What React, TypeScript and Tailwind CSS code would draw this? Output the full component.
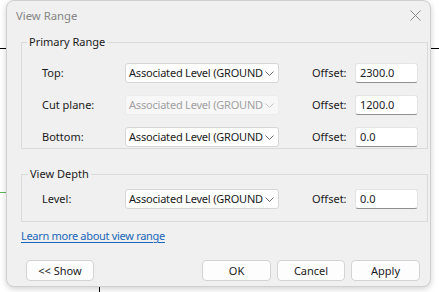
import React from "react";

const font = { fontFamily: '"Noto Sans", "Segoe UI", sans-serif' };

function Chevron({ disabled }: { disabled?: boolean }) {
  return (
    <svg width="9" height="5" viewBox="0 0 9 5" className="shrink-0">
      <path d="M0.5 0.5 L4.5 4.5 L8.5 0.5" fill="none" stroke={disabled ? "#c4c4c4" : "#6e6e6e"} strokeWidth="1" />
    </svg>
  );
}

function Select({ disabled }: { disabled?: boolean }) {
  return (
    <div
      className={
        "w-[154px] h-[20px] flex items-center justify-between pl-[3px] pr-[4px] rounded-[3px] " +
        (disabled
          ? "bg-[#f7f7f7] text-[#a0a0a0] border border-[#ececec]"
          : "bg-white text-[#1b1b1b] border border-[#d6d6d6]")
      }
    >
      <span className="whitespace-nowrap tracking-[-0.2px]">Associated Level (GROUND</span>
      <Chevron disabled={disabled} />
    </div>
  );
}

function Row({ label, value, disabled }: { label: string; value: string; disabled?: boolean }) {
  return (
    <div className="flex items-center h-[20px]">
      <div className="w-[83px] text-[#1b1b1b]">{label}</div>
      <Select disabled={disabled} />
      <div className="ml-[33px] w-[43px] text-[#1b1b1b]">Offset:</div>
      <div className="w-[63px] h-[20px] bg-white border border-[#e3e3e3] border-b-[#8f8f8f] rounded-[3px] flex items-center pl-[4px] text-[#1b1b1b]">
        {value}
      </div>
    </div>
  );
}

function Btn({ children, w }: { children: React.ReactNode; w: string }) {
  return (
    <div className={"h-[21px] flex items-center justify-center rounded-[4px] bg-[#fdfdfd] border border-[#d3d3d3] text-[#1b1b1b] " + w}>
      {children}
    </div>
  );
}

export default function App() {
  return (
    <div className="relative w-[439px] h-[292px] bg-white overflow-hidden text-[11px] leading-[16px]" style={font}>
      {/* desktop lines behind the dialog */}
      <div className="absolute left-0 top-[48px] w-[10px] h-[1px] bg-black" />
      <div className="absolute right-0 top-[48px] w-[12px] h-[1px] bg-black" />
      <div className="absolute left-0 top-[192px] w-[10px] h-[1px] bg-[#5fb760]" />
      <div className="absolute left-[99px] top-[280px] w-[1px] h-[12px] bg-black" />

      <div className="relative ml-[6px] w-[425px] h-[287px] rounded-[8px] border border-[#cfcfcf] bg-[#f0f0f0] shadow-[0_2px_6px_rgba(0,0,0,0.18)] flex flex-col">
        <div className="h-[29px] flex items-center justify-between pl-[9px] pr-[9px] shrink-0">
          <span className="text-[#858585] text-[11.3px]">View Range</span>
          <svg width="11" height="11" viewBox="0 0 11 11">
            <path d="M0.5 0.5 L10.5 10.5 M10.5 0.5 L0.5 10.5" stroke="#8a8a8a" strokeWidth="1" />
          </svg>
        </div>

        <div className="pl-[14px] flex flex-col">
          <fieldset className="mt-[4px] w-[407px] border border-[#dadada] pb-[1px]">
            <legend className="ml-[5px] px-[2px] text-[#1b1b1b]">Primary Range</legend>
            <div className="pt-[13px] pl-[20px] flex flex-col gap-[12px]">
              <Row label="Top:" value="2300.0" />
              <Row label="Cut plane:" value="1200.0" disabled />
              <Row label="Bottom:" value="0.0" />
            </div>
          </fieldset>

          <fieldset className="mt-[17px] w-[407px] border border-[#dadada] pb-[12px]">
            <legend className="ml-[6px] px-[2px] text-[#1b1b1b]">View Depth</legend>
            <div className="pt-[7px] pl-[20px] flex flex-col">
              <Row label="Level:" value="0.0" />
            </div>
          </fieldset>

          <div className="mt-[6px] text-[#1a67b8] underline underline-offset-2 tracking-[-0.3px]">Learn more about view range</div>

          <div className="mt-[16px] flex items-center pl-[5px] pr-[10px]">
            <Btn w="w-[68px]">&lt;&lt; Show</Btn>
            <div className="flex-1" />
            <div className="flex gap-[6px]">
              <Btn w="w-[69px]">OK</Btn>
              <Btn w="w-[68px]">Cancel</Btn>
              <Btn w="w-[69px]">Apply</Btn>
            </div>
          </div>
        </div>
      </div>
    </div>
  );
}
